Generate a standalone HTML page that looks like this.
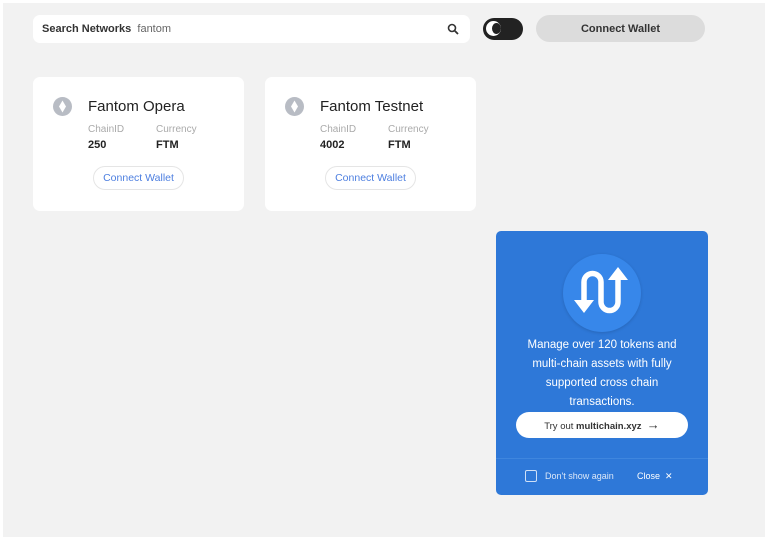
<!DOCTYPE html>
<html><head><style>
*{margin:0;padding:0;box-sizing:border-box}
body{width:768px;height:540px;background:#fff;font-family:"Liberation Sans",sans-serif;position:relative;overflow:hidden}
.bg{position:absolute;left:3px;top:3px;width:762px;height:534px;background:#f2f2f2}
.abs{position:absolute}
.search{left:33px;top:15px;width:437px;height:28px;background:#fff;border-radius:7px;font-size:11px;line-height:28px;padding-left:9px;color:#333}
.card{background:#fff;border-radius:7px;width:211px;height:134px;top:77px}
.card .ic{position:absolute;left:20px;top:20px;width:19px;height:19px;border-radius:50%;background:#b8bcc4}
.card h2{position:absolute;left:55px;top:21px;font-size:15px;font-weight:normal;color:#222}
.lbl{position:absolute;top:47px;font-size:10px;color:#aaa}
.val{position:absolute;top:62px;font-size:11px;font-weight:bold;color:#222}
.btn{position:absolute;left:60px;top:89px;width:91px;height:24px;border:1px solid #e5e5e5;border-radius:12px;font-size:10.5px;color:#4d7fe0;text-align:center;line-height:22px}
</style></head><body>
<div class="bg"></div>
<div class="abs search"><b style="color:#333">Search Networks</b>&nbsp; <span style="color:#666">fantom</span>
<svg style="position:absolute;right:11px;top:8px" width="12" height="12" viewBox="0 0 12 12"><circle cx="5" cy="5" r="3.5" fill="none" stroke="#333" stroke-width="1.6"/><path d="M7.6 7.6L11 11" stroke="#333" stroke-width="1.8"/></svg></div>
<div class="abs" style="left:483px;top:18px;width:40px;height:22px;border-radius:11px;background:#222"><div style="position:absolute;left:3px;top:3px;width:15px;height:15px;border-radius:50%;background:#fff"></div><div style="position:absolute;left:9px;top:5px;width:9px;height:11px;border-radius:50%;background:#222"></div></div>
<div class="abs" style="left:536px;top:15px;width:169px;height:27px;border-radius:14px;background:#dcdcdc;font-size:11px;font-weight:bold;color:#333;text-align:center;line-height:28px">Connect Wallet</div>

<div class="abs card" style="left:33px"><div class="ic"><svg width="19" height="19" viewBox="0 0 19 19"><path d="M9.5 3.5L13 9.5 9.5 15.5 6 9.5z" fill="#fff"/></svg></div><h2>Fantom Opera</h2><div class="lbl" style="left:55px">ChainID</div><div class="lbl" style="left:123px">Currency</div><div class="val" style="left:55px">250</div><div class="val" style="left:123px">FTM</div><div class="btn">Connect Wallet</div></div>
<div class="abs card" style="left:265px"><div class="ic"><svg width="19" height="19" viewBox="0 0 19 19"><path d="M9.5 3.5L13 9.5 9.5 15.5 6 9.5z" fill="#fff"/></svg></div><h2>Fantom Testnet</h2><div class="lbl" style="left:55px">ChainID</div><div class="lbl" style="left:123px">Currency</div><div class="val" style="left:55px">4002</div><div class="val" style="left:123px">FTM</div><div class="btn">Connect Wallet</div></div>

<div class="abs" style="left:496px;top:231px;width:212px;height:264px;background:#2e78d8;border-radius:5px;color:#fff">
<div style="position:absolute;left:67px;top:23px;width:78px;height:78px;border-radius:50%;background:#3787ea;box-shadow:0 1px 3px rgba(0,0,0,.15)">
<svg width="78" height="78" viewBox="0 0 78 78"><path d="M21 50V28a8.5 8.5 0 0 1 17 0v20a8.5 8.5 0 0 0 17 0V24" fill="none" stroke="#fff" stroke-width="5.5"/><path d="M11 46h20l-10 13z M45 26h20l-10-13z" fill="#fff"/></svg></div>
<div style="position:absolute;top:105px;left:0;width:212px;text-align:center;font-size:11.5px;line-height:19px">Manage over 120 tokens and<br>multi-chain assets with fully<br>supported cross chain<br>transactions.</div>
<div style="position:absolute;left:20px;top:181px;width:172px;height:26px;border-radius:13px;background:#fff;color:#333;font-size:9.5px;text-align:center;line-height:26px">Try out <b>multichain.xyz</b> &nbsp;<span style="font-size:13px">→</span></div>
<div style="position:absolute;left:0;top:227px;width:212px;border-top:1px solid #3f86de"></div>
<div style="position:absolute;left:29px;top:239px;width:12px;height:12px;border:1px solid #cfe0f7;border-radius:2px"></div>
<div style="position:absolute;left:49px;top:240px;font-size:9px;color:#dbe7f8">Don't show again</div>
<div style="position:absolute;left:141px;top:240px;font-size:9px;color:#fff">Close &nbsp;✕</div>
</div>
</body></html>
